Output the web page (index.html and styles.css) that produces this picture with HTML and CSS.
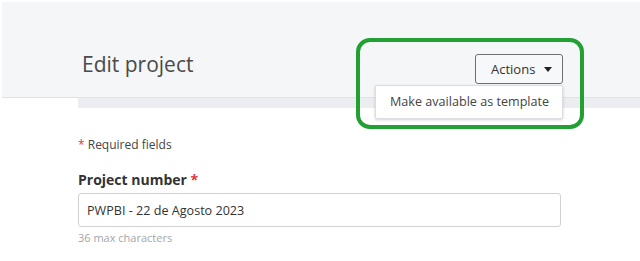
FILE: index.html
```html
<!DOCTYPE html>
<html lang="en">
<head>
<meta charset="utf-8">
<title>Edit project</title>
<link rel="stylesheet" href="styles.css">
</head>
<body>
<div class="app">
  <header class="head">
    <div class="head-inner">
      <h1 class="title">Edit project</h1>
      <div class="actions">
        <button class="btn" type="button">Actions <span class="caret"></span></button>
        <ul class="menu">
          <li class="menu-item">Make available as template</li>
        </ul>
      </div>
    </div>
  </header>
  <div class="band"></div>
  <main class="form">
    <p class="req"><span class="star">*</span> Required fields</p>
    <label class="label" for="pn">Project number <span class="star">*</span></label>
    <input class="input" id="pn" type="text" value="PWPBI - 22 de Agosto 2023">
    <p class="hint">36 max characters</p>
  </main>
  <div class="highlight"></div>
</div>
</body>
</html>
```

FILE: styles.css
```css
* { box-sizing: border-box; }
html, body { margin: 0; padding: 0; background: #ffffff; }
body {
  font-family: "Open Sans", "Noto Sans", sans-serif;
  color: #333;
  overflow: hidden;
}
.app {
  position: relative;
  margin: 2px 0 0 2px;
}
.head {
  background: #f5f6f8;
  height: 96px;
  border-bottom: 1px solid #dfe1e5;
}
.head-inner {
  display: flex;
  justify-content: space-between;
  align-items: flex-start;
  padding-left: 76px;
  width: 561px;
}
.title {
  margin: 47px 0 0 4px;
  font-size: 21px;
  line-height: 30px;
  font-weight: 400;
  color: #4a4a4a;
}
.actions {
  position: relative;
  margin-top: 52px;
}
.btn {
  display: flex;
  align-items: center;
  gap: 9px;
  height: 30px;
  width: 88px;
  padding: 0 0 0 15px;
  border: 1px solid #6d6f72;
  border-radius: 3px;
  background: #f7f8f9;
  font-family: inherit;
  font-size: 13px;
  color: #333;
}
.caret {
  width: 0;
  height: 0;
  border-left: 4px solid transparent;
  border-right: 4px solid transparent;
  border-top: 5px solid #222;
}
.menu {
  position: absolute;
  top: 31px;
  right: 0;
  width: 188px;
  height: 34px;
  margin: 0;
  padding: 0;
  list-style: none;
  background: #fff;
  border: 1px solid #dcdde0;
  border-radius: 2px;
  box-shadow: 0 1px 3px rgba(0,0,0,0.18);
  z-index: 2;
}
.menu-item {
  padding: 0 0 0 14px;
  line-height: 32px;
  font-size: 12.6px;
  color: #444;
  white-space: nowrap;
}
.band {
  margin-left: 76px;
  height: 10px;
  background: #ecedf0;
}
.form {
  padding-left: 76px;
}
.req {
  margin: 28px 0 0 0;
  font-size: 12px;
  line-height: 18px;
  color: #444;
}
.star { color: #e0383e; }
.label {
  display: block;
  margin-top: 16px;
  font-size: 14px;
  line-height: 20px;
  font-weight: 700;
  color: #333;
}
.input {
  display: block;
  margin-top: 3px;
  width: 483px;
  height: 34px;
  padding: 0 8px;
  border: 1px solid #cfd3d8;
  border-radius: 3px;
  font-family: inherit;
  font-size: 12.6px;
  color: #333;
  background: #fff;
}
.hint {
  margin: 3px 0 0 0;
  font-size: 11px;
  line-height: 16px;
  color: #a3a6aa;
}
.highlight {
  position: absolute;
  left: 354px;
  top: 36px;
  width: 228px;
  height: 91px;
  border: 4px solid #22a033;
  border-radius: 14px;
  pointer-events: none;
  z-index: 3;
}
```
